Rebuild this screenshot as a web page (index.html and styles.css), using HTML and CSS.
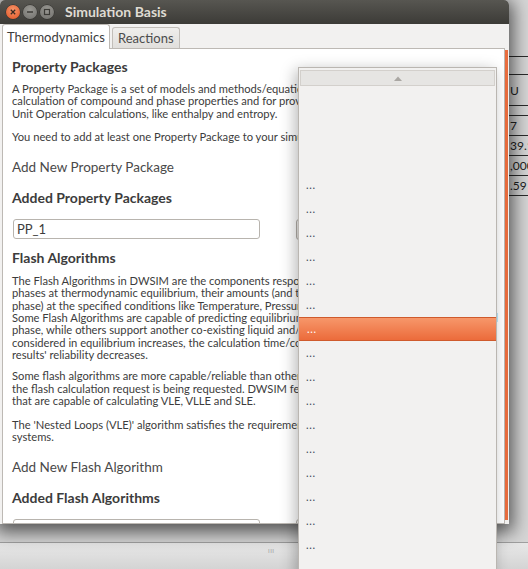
FILE: index.html
```html
<!DOCTYPE html>
<html>
<head>
<meta charset="utf-8">
<title>Simulation Basis</title>
<link rel="stylesheet" href="styles.css">
</head>
<body>
<div class="desk">
  <div class="bgapp">
    <div class="bgmain">
      <div class="bgtable">
        <div class="row r-a"></div>
        <div class="row r-b">U</div>
        <div class="row r-c"></div>
        <div class="row r-d">7</div>
        <div class="row r-d">39.1</div>
        <div class="row r-d">,000</div>
        <div class="row r-d last">.59</div>
      </div>
    </div>
    <div class="bgstatus"><span class="grip">III</span></div>
  </div>

  <div class="window">
    <div class="titlebar">
      <div class="wbtns">
        <span class="wbtn close">
          <svg width="14" height="14" viewBox="0 0 14 14"><path d="M4.8 4.8 L9.2 9.2 M9.2 4.8 L4.8 9.2" stroke="#3a2a22" stroke-width="1.3" fill="none"/></svg>
        </span>
        <span class="wbtn">
          <svg width="14" height="14" viewBox="0 0 14 14"><path d="M4 7 H10" stroke="#3c3b37" stroke-width="1.5" fill="none"/></svg>
        </span>
        <span class="wbtn">
          <svg width="14" height="14" viewBox="0 0 14 14"><rect x="4.5" y="4.5" width="5" height="5" stroke="#3c3b37" stroke-width="1.2" fill="none"/></svg>
        </span>
      </div>
      <div class="title">Simulation Basis</div>
    </div>

    <div class="tabbar">
      <div class="tab active">Thermodynamics</div>
      <div class="tab">Reactions</div>
    </div>

    <div class="pane">
      <div class="h first">Property Packages</div>
      <div class="p g8">
        <div class="ln">A Property Package is a set of models and methods/equations which are responsible for the</div>
        <div class="ln">calculation of compound and phase properties and for providing thermodynamic support for</div>
        <div class="ln">Unit Operation calculations, like enthalpy and entropy.</div>
      </div>
      <div class="p g11">
        <div class="ln">You need to add at least one Property Package to your simulation.</div>
      </div>
      <div class="add g15">Add New Property Package</div>
      <div class="h g14">Added Property Packages</div>
      <div class="field g13">
        <div class="input">PP_1</div>
        <div class="btn"></div>
      </div>
      <div class="h g11">Flash Algorithms</div>
      <div class="p g9">
        <div class="ln">The Flash Algorithms in DWSIM are the components responsible for determining a particular set of</div>
        <div class="ln">phases at thermodynamic equilibrium, their amounts (and the amounts of each compound on each</div>
        <div class="ln">phase) at the specified conditions like Temperature, Pressure, Enthalpy or Entropy.</div>
        <div class="ln">Some Flash Algorithms are capable of predicting equilibrium between only one vapor and one liquid</div>
        <div class="ln">phase, while others support another co-existing liquid and/or solid phase. As the number of phases</div>
        <div class="ln">considered in equilibrium increases, the calculation time/complexity also increases, while the</div>
        <div class="ln">results' reliability decreases.</div>
      </div>
      <div class="p g9">
        <div class="ln">Some flash algorithms are more capable/reliable than others, depending on the mixture for which</div>
        <div class="ln">the flash calculation request is being requested. DWSIM features five Flash Algorithms</div>
        <div class="ln">that are capable of calculating VLE, VLLE and SLE.</div>
      </div>
      <div class="p g12">
        <div class="ln">The 'Nested Loops (VLE)' algorithm satisfies the requirements for the majority of the</div>
        <div class="ln">systems.</div>
      </div>
      <div class="add g14">Add New Flash Algorithm</div>
      <div class="h g14">Added Flash Algorithms</div>
      <div class="field g13">
        <div class="input"></div>
        <div class="btn"></div>
      </div>
    </div>
    <div class="scrollind"></div>
  </div>

  <div class="popup">
    <div class="popup-arrow">
      <svg width="8" height="5" viewBox="0 0 8 5"><path d="M0 5 L4 0.5 L8 5 Z" fill="#aaa7a3"/></svg>
    </div>
    <div class="popup-list">
      <div class="spacer"></div>
      <div class="item">...</div>
      <div class="item">...</div>
      <div class="item">...</div>
      <div class="item">...</div>
      <div class="item">...</div>
      <div class="item">...</div>
      <div class="item hl">...</div>
      <div class="item">...</div>
      <div class="item">...</div>
      <div class="item">...</div>
      <div class="item">...</div>
      <div class="item">...</div>
      <div class="item">...</div>
      <div class="item">...</div>
      <div class="item">...</div>
      <div class="item">...</div>
      <div class="item">...</div>
    </div>
  </div>
</div>
</body>
</html>
```
FILE: styles.css
```css
html, body {
  margin: 0;
  padding: 0;
}
body {
  width: 528px;
  height: 569px;
  overflow: hidden;
  font-family: Lato, "DejaVu Sans", sans-serif;
}
.desk {
  position: relative;
  width: 528px;
  height: 569px;
  overflow: hidden;
}

/* background application */
.bgapp {
  width: 528px;
  height: 569px;
  display: flex;
  flex-direction: column;
  background: #d6d6d6;
}
.bgmain {
  flex: 0 0 542px;
  display: flex;
  justify-content: flex-end;
}
.bgtable {
  width: 19px;
  padding-top: 56px;
}
.row {
  box-sizing: border-box;
  border-top: 1px solid #2a2a2a;
  font-size: 12px;
  color: #222;
  padding-left: 1px;
  display: flex;
  align-items: center;
  white-space: nowrap;
  overflow: hidden;
}
.r-a { height: 18px; }
.r-b { height: 31px; }
.r-c { height: 10px; }
.r-d { height: 20px; }
.row.last { border-bottom: 1px solid #2a2a2a; height: 21px; }
.bgstatus {
  flex: 1;
  border-top: 1px solid #a0a0a0;
  background: linear-gradient(#e8e8e8, #d4d4d4);
  padding-left: 268px;
  line-height: 8px;
}
.grip {
  font-size: 6px;
  color: #a0a0a0;
  letter-spacing: 0.5px;
}

/* window */
.window {
  position: absolute;
  left: 0;
  top: 0;
  width: 509px;
  height: 524px;
  background: #f2f1f0;
  border-radius: 5px 5px 0 0;
  box-shadow: 0 4px 18px 4px rgba(0, 0, 0, 0.62);
  display: flex;
  flex-direction: column;
  overflow: hidden;
}
.titlebar {
  flex: none;
  height: 24px;
  box-sizing: border-box;
  padding-left: 6px;
  display: flex;
  align-items: center;
  background: linear-gradient(#575651, #3c3b37);
}
.wbtns {
  display: flex;
  gap: 3px;
}
.wbtn {
  width: 14px;
  height: 14px;
  border-radius: 50%;
  background: radial-gradient(circle at 50% 35%, #9a9994, #6f6e6a);
  box-shadow: 0 0 0 0.5px #2f2e2b;
  display: flex;
}
.wbtn.close {
  background: radial-gradient(circle at 50% 35%, #f7956a, #e05323);
}
.title {
  margin-left: 11px;
  color: #dfdbd2;
  font-weight: bold;
  font-size: 14px;
  line-height: 24px;
}

.tabbar {
  flex: none;
  height: 24px;
  padding-left: 2px;
  display: flex;
  align-items: flex-end;
  position: relative;
  z-index: 1;
}
.tab {
  box-sizing: border-box;
  margin-left: 2px;
  width: 68px;
  height: 21px;
  padding-left: 5px;
  background: linear-gradient(#efeeec, #e1dfdc);
  border: 1px solid #c2beb9;
  border-bottom: none;
  border-radius: 3px 3px 0 0;
  font-size: 13px;
  line-height: 21px;
  color: #4c4c4c;
}
.tab.active {
  margin-left: 0;
  width: 108px;
  height: 25px;
  margin-bottom: -1px;
  padding-left: 4px;
  background: #ffffff;
  border-color: #bdb9b4;
  line-height: 25px;
  color: #3c3c3c;
}

.pane {
  flex: 1;
  margin: 0 4px 0 2px;
  background: #ffffff;
  border: 1px solid #bdb9b4;
  padding-left: 9px;
  overflow: hidden;
  color: #3c3c3c;
}
.h {
  font-size: 14px;
  font-weight: bold;
  line-height: 16px;
  white-space: nowrap;
}
.h.first { margin-top: 10px; }
.p {
  font-size: 11.2px;
  line-height: 12.3px;
}
.ln { white-space: nowrap; }
.add {
  font-size: 13.5px;
  line-height: 18px;
  color: #4a4a4a;
  white-space: nowrap;
}
.g8 { margin-top: 8px; }
.g9 { margin-top: 9px; }
.g11 { margin-top: 11px; }
.g12 { margin-top: 12px; }
.g13 { margin-top: 13px; }
.g14 { margin-top: 14px; }
.g15 { margin-top: 15px; }

.field {
  display: flex;
  height: 20px;
}
.input {
  box-sizing: border-box;
  margin-left: 1px;
  width: 247px;
  height: 20px;
  border: 1px solid #b8b4ae;
  border-radius: 3px;
  background: #fff;
  padding-left: 3px;
  font-size: 13px;
  line-height: 18px;
  color: #3c3c3c;
}
.btn {
  box-sizing: border-box;
  margin-left: 36px;
  width: 80px;
  height: 21px;
  border: 1px solid #b3afa9;
  border-radius: 3px;
  background: linear-gradient(#f6f5f4, #e6e4e1);
}

.scrollind {
  position: absolute;
  left: 505px;
  top: 50px;
  width: 3px;
  height: 470px;
  background: #e96d3e;
}

/* popup menu */
.popup {
  position: absolute;
  left: 298px;
  top: 67px;
  width: 199px;
  height: 510px;
  box-sizing: border-box;
  background: #f2f1f0;
  border: 1px solid #bab6b1;
  box-shadow: -3px 3px 14px rgba(0, 0, 0, 0.28);
  display: flex;
  flex-direction: column;
  overflow: hidden;
  font-size: 11px;
  color: #3e4a5c;
}
.popup-arrow {
  flex: none;
  box-sizing: border-box;
  height: 16px;
  margin: 2px 1px 0;
  background: #e6e5e3;
  border: 1px solid #d3d0cc;
  display: flex;
  align-items: center;
  justify-content: center;
}
.popup-list {
  flex: 1;
  display: flex;
  flex-direction: column;
}
.spacer {
  flex: none;
  height: 87px;
}
.item {
  flex: none;
  box-sizing: border-box;
  height: 24px;
  padding-left: 7px;
  line-height: 24px;
  letter-spacing: 0.6px;
}
.item.hl {
  margin: 0 -1px;
  padding-left: 8px;
  background: linear-gradient(#f7976a, #ec6b3b);
  border: 1px solid #cf5a2c;
  line-height: 22px;
  color: #ffffff;
}
```
